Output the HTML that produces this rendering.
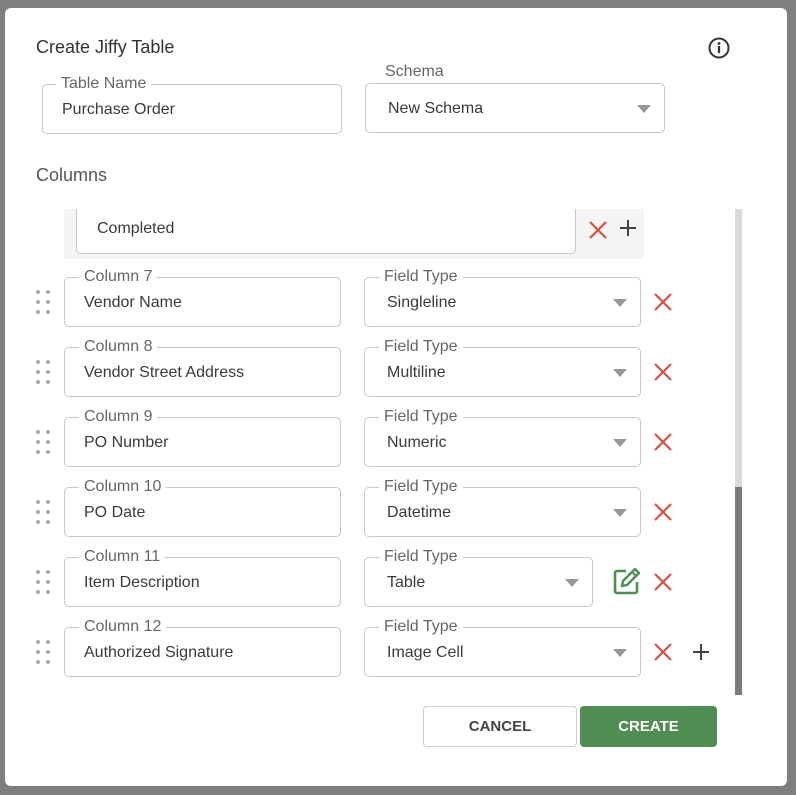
<!DOCTYPE html>
<html><head><style>
*{box-sizing:border-box;margin:0;padding:0}
body{width:796px;height:795px;background:#7f7f7f;position:relative;overflow:hidden;font-family:"Liberation Sans",sans-serif;}
.m{position:absolute;left:5px;top:8px;width:782px;height:778px;background:#fff;border-radius:6px}
.a{position:absolute}
.box{position:absolute;border:1px solid #c8c8c8;border-radius:5px;background:#fff}
.lbl{position:absolute;top:-11px;font-size:16px;color:#666;background:#fff;padding:0 5px;line-height:20px}
.val{position:absolute;font-size:16px;color:#3a3a3a;top:15px;line-height:20px}
.tri{position:absolute;right:13px;top:21px;width:0;height:0;border-left:7px solid transparent;border-right:7px solid transparent;border-top:8px solid #999}
.x{position:absolute;width:20px;height:20px}
.drag{position:absolute;width:18px;height:26px}
</style></head><body>
<div class="m"></div>
<div class="a" style="left:36px;top:37px;font-size:18px;color:#333">Create Jiffy Table</div>
<svg class="a" style="left:708px;top:37px" width="22" height="22" viewBox="0 0 22 22"><circle cx="11" cy="11" r="9.5" fill="none" stroke="#333" stroke-width="2"/><circle cx="11" cy="6.5" r="1.4" fill="#333"/><rect x="9.9" y="9" width="2.2" height="7" fill="#333"/></svg>

<div class="box" style="left:42px;top:84px;width:300px;height:50px"><span class="lbl" style="left:13px">Table Name</span><span class="val" style="left:19px">Purchase Order</span></div>
<div class="a" style="left:385px;top:63px;font-size:16px;color:#666">Schema</div>
<div class="box" style="left:365px;top:83px;width:300px;height:50px"><span class="val" style="left:22px">New Schema</span><span class="tri"></span></div>
<div class="a" style="left:36px;top:165px;font-size:18px;color:#555">Columns</div>

<div class="a" style="left:64px;top:209px;width:580px;height:50px;background:#f4f4f4"></div>
<div class="box" style="left:76px;top:190px;width:500px;height:64px"></div>
<div class="a" style="left:97px;top:220px;font-size:16px;color:#3a3a3a">Completed</div>
<svg class="x" style="left:588px;top:220px" viewBox="0 0 20 20"><path d="M2 2L18 18M18 2L2 18" stroke="#d9503f" stroke-width="2.2"/></svg>
<svg class="x" style="left:618px;top:218px" viewBox="0 0 20 20"><path d="M10 2V18M2 10H18" stroke="#444" stroke-width="2"/></svg>
<div class="a" style="left:64px;top:188px;width:680px;height:21px;background:#fff"></div>

<div id="rows"></div>

<div class="a" style="left:735px;top:209px;width:7px;height:278px;background:#dadada"></div>
<div class="a" style="left:735px;top:487px;width:7px;height:208px;background:#7a7a7a"></div>

<div class="a" style="left:423px;top:706px;width:154px;height:41px;border:1px solid #ccc;border-radius:4px;font-size:15px;font-weight:bold;color:#444;text-align:center;line-height:39px">CANCEL</div>
<div class="a" style="left:580px;top:706px;width:137px;height:41px;background:#4f8d52;border-radius:4px;font-size:15px;font-weight:bold;color:#fff;text-align:center;line-height:41px">CREATE</div>

<script>
var d=[["Column 7","Vendor Name","Singleline"],["Column 8","Vendor Street Address","Multiline"],["Column 9","PO Number","Numeric"],["Column 10","PO Date","Datetime"],["Column 11","Item Description","Table"],["Column 12","Authorized Signature","Image Cell"]];
var h="";
d.forEach(function(r,i){var y=277+i*70;var fw=i==4?229:277;
h+='<svg class="drag" style="left:34px;top:'+(y+12)+'px" viewBox="0 0 18 26"><g fill="#aaa"><circle cx="4" cy="3" r="2"/><circle cx="14" cy="3" r="2"/><circle cx="4" cy="13" r="2"/><circle cx="14" cy="13" r="2"/><circle cx="4" cy="23" r="2"/><circle cx="14" cy="23" r="2"/></g></svg>';
h+='<div class="box" style="left:64px;top:'+y+'px;width:277px;height:50px"><span class="lbl" style="left:14px">'+r[0]+'</span><span class="val" style="left:19px">'+r[1]+'</span></div>';
h+='<div class="box" style="left:364px;top:'+y+'px;width:'+fw+'px;height:50px"><span class="lbl" style="left:14px">Field Type</span><span class="val" style="left:22px">'+r[2]+'</span><span class="tri"></span></div>';
h+='<svg class="x" style="left:653px;top:'+(y+15)+'px" viewBox="0 0 20 20"><path d="M2 2L18 18M18 2L2 18" stroke="#d9503f" stroke-width="2.2"/></svg>';
if(i==4)h+='<svg class="a" style="left:612px;top:'+(y+9)+'px" width="30" height="30" viewBox="0 0 30 30"><path d="M14 5H5a2 2 0 0 0-2 2v18a2 2 0 0 0 2 2h18a2 2 0 0 0 2-2v-9" fill="none" stroke="#4f8d52" stroke-width="2.6"/><path d="M23 3l4 4-12 12-5 1 1-5z" fill="none" stroke="#4f8d52" stroke-width="2.4" stroke-linejoin="round"/><path d="M20 6l4 4" stroke="#4f8d52" stroke-width="2"/></svg>';
if(i==5)h+='<svg class="x" style="left:691px;top:'+(y+15)+'px" viewBox="0 0 20 20"><path d="M10 2V18M2 10H18" stroke="#444" stroke-width="2"/></svg>';
});
document.getElementById("rows").innerHTML=h;
</script>
</body></html>
